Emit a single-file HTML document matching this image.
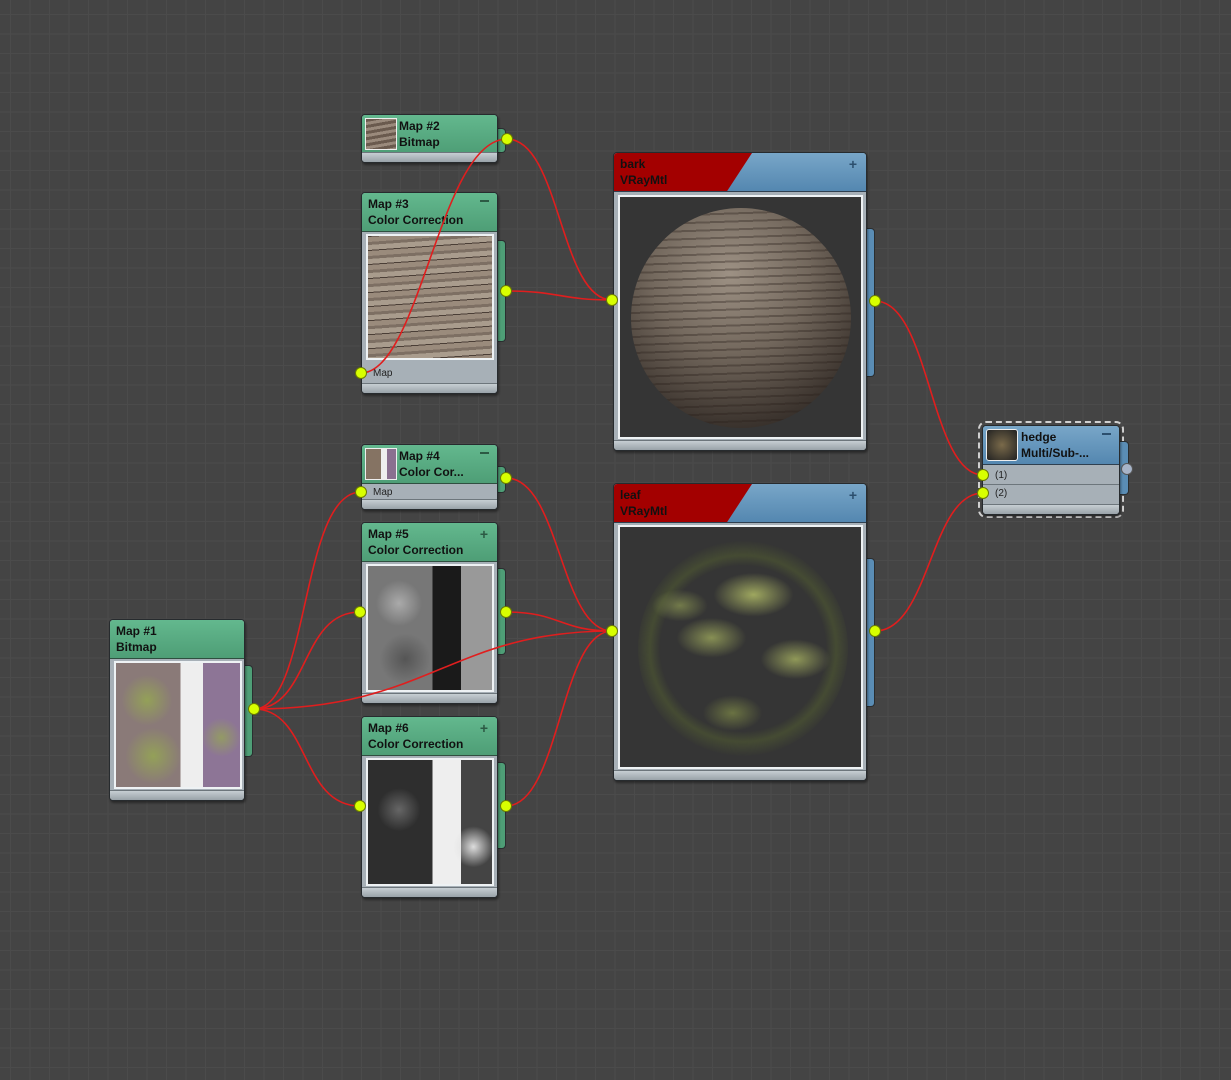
<!DOCTYPE html>
<html><head><meta charset="utf-8"><style>
body{margin:0;width:1231px;height:1080px;overflow:hidden;background-color:#444;
background-image:linear-gradient(#4b4b4b 1px,transparent 1px),linear-gradient(90deg,#4b4b4b 1px,transparent 1px);
background-size:19.5px 19.5px;background-position:10px 14px;font-family:"Liberation Sans",sans-serif;position:relative}
.n{position:absolute;background:#a7b0b7;border:1px solid #272b2e;border-radius:4px;box-sizing:border-box;box-shadow:1px 2px 2px rgba(0,0,0,.4)}
.h{position:absolute;left:0;right:0;top:0;height:38px;border-radius:3px 3px 0 0;background:linear-gradient(#63b88e,#4e9e76);border-bottom:1px solid #2f4f40}
.hb{background:linear-gradient(#78a6c8,#5487b0);border-bottom:1px solid #2f4050}
.t{position:absolute;font-size:12px;font-weight:bold;color:#111;line-height:16px}
.ft{position:absolute;left:0;right:0;bottom:0;height:9px;background:linear-gradient(#c7ced3,#9aa3a9);border-top:1px solid #6d767c;border-radius:0 0 3px 3px}
.tab{position:absolute;width:9px;background:#4e9e76;border:1px solid #2a2e30;border-left:none;border-radius:0 4px 4px 0}
.tabb{background:#5a8db5}
.p{position:absolute;width:12px;height:12px;border-radius:50%;background:#d8ff00;border:1px solid #6a7a00;box-sizing:border-box;margin:-6px 0 0 -6px;z-index:5}
.img{position:absolute;border:2px solid #eef2f4;box-sizing:border-box}
.row{position:absolute;font-size:10px;color:#222}
.min{position:absolute;right:8px;top:7px;width:9px;height:2px;background:#2c5a44}
.pl{position:absolute;right:9px;top:3px;font-size:14px;font-weight:bold;color:#2c5a44}
svg{position:absolute;left:0;top:0;z-index:4}
</style></head><body>

<div class="tab" style="left:496px;top:128px;height:23px"></div>
<div class="n" style="left:361px;top:114px;width:137px;height:49px">
<div class="h"><div style="position:absolute;left:3px;top:3px;width:30px;height:30px;border:1px solid #eee;background:repeating-linear-gradient(170deg,#6a5a4e 0 3px,#9a8a7c 3px 6px)"></div>
<div class="t" style="left:37px;top:3px">Map #2<br>Bitmap</div></div><div class="ft"></div></div>

<div class="tab" style="left:496px;top:240px;height:100px"></div>
<div class="n" style="left:361px;top:192px;width:137px;height:202px">
<div class="h"><div class="t" style="left:6px;top:3px">Map #3<br>Color Correction</div><div class="min"></div></div>
<div class="img" style="left:4px;top:41px;width:128px;height:126px;background:repeating-linear-gradient(176deg,#4a3e36 0 1px,#9a8b7c 1px 6px,#7d6f63 6px 9px,#a99c8d 9px 14px)"></div>
<div class="row" style="left:11px;top:175px">Map</div><div class="ft"></div></div>

<div class="tab tabb" style="left:865px;top:228px;height:147px"></div>
<div class="n" style="left:613px;top:152px;width:254px;height:299px">
<div class="h hb" style="overflow:hidden"><div style="position:absolute;left:0;top:0;width:138px;height:38px;background:#a30000;clip-path:polygon(0 0,100% 0,82% 100%,0 100%)"></div>
<div class="t" style="left:6px;top:3px">bark<br>VRayMtl</div><div class="pl" style="color:#2c4f6e">+</div></div>
<div class="img" style="left:4px;top:42px;width:245px;height:244px;background:#353535">
<div style="position:absolute;left:11px;top:11px;width:220px;height:220px;border-radius:50%;background:repeating-linear-gradient(178deg,rgba(40,30,25,.35) 0 2px,transparent 2px 8px),radial-gradient(circle at 45% 30%,#9d9184 0,#73685d 40%,#3e3630 75%,#1f1b18 100%)"></div></div>
<div class="ft"></div></div>

<div class="tab" style="left:496px;top:466px;height:25px"></div>
<div class="n" style="left:361px;top:444px;width:137px;height:66px">
<div class="h"><div style="position:absolute;left:3px;top:3px;width:30px;height:30px;border:1px solid #eee;background:linear-gradient(90deg,#857363 0 50%,#eee 50% 70%,#8a7090 70%)"></div>
<div class="t" style="left:37px;top:3px">Map #4<br>Color Cor...</div><div class="min"></div></div>
<div class="row" style="left:11px;top:42px">Map</div><div class="ft"></div></div>

<div class="tab" style="left:496px;top:568px;height:85px"></div>
<div class="n" style="left:361px;top:522px;width:137px;height:182px">
<div class="h"><div class="t" style="left:6px;top:3px">Map #5<br>Color Correction</div><div class="pl">+</div></div>
<div class="img" style="left:4px;top:41px;width:128px;height:128px;background:radial-gradient(circle at 25% 30%,#aaa 0,transparent 18%),radial-gradient(circle at 30% 75%,#555 0,transparent 20%),linear-gradient(90deg,#777 0 52%,#1a1a1a 52% 75%,#999 75%)"></div>
<div class="ft"></div></div>

<div class="tab" style="left:496px;top:762px;height:85px"></div>
<div class="n" style="left:361px;top:716px;width:137px;height:182px">
<div class="h"><div class="t" style="left:6px;top:3px">Map #6<br>Color Correction</div><div class="pl">+</div></div>
<div class="img" style="left:4px;top:41px;width:128px;height:128px;background:radial-gradient(circle at 25% 40%,#666 0,transparent 18%),radial-gradient(circle at 85% 70%,#ddd 0,transparent 15%),linear-gradient(90deg,#2e2e2e 0 52%,#eee 52% 75%,#444 75%)"></div>
<div class="ft"></div></div>

<div class="tab tabb" style="left:865px;top:558px;height:147px"></div>
<div class="n" style="left:613px;top:483px;width:254px;height:298px">
<div class="h hb" style="overflow:hidden"><div style="position:absolute;left:0;top:0;width:138px;height:38px;background:#a30000;clip-path:polygon(0 0,100% 0,82% 100%,0 100%)"></div>
<div class="t" style="left:6px;top:3px">leaf<br>VRayMtl</div><div class="pl" style="color:#2c4f6e">+</div></div>
<div class="img" style="left:4px;top:41px;width:245px;height:244px;background:#353535">
<div style="position:absolute;left:18px;top:14px;width:210px;height:215px;border-radius:50%;background:radial-gradient(ellipse 40px 22px at 55% 25%,rgba(170,180,100,.9) 0,transparent 100%),radial-gradient(ellipse 35px 20px at 35% 45%,rgba(150,160,90,.85) 0,transparent 100%),radial-gradient(ellipse 35px 20px at 75% 55%,rgba(160,170,95,.85) 0,transparent 100%),radial-gradient(ellipse 30px 18px at 45% 80%,rgba(120,130,70,.8) 0,transparent 100%),radial-gradient(ellipse 28px 16px at 20% 30%,rgba(130,140,80,.8) 0,transparent 100%),radial-gradient(circle,transparent 55%,rgba(80,90,50,.6) 62%,transparent 72%)"></div></div>
<div class="ft"></div></div>

<div class="tab" style="left:243px;top:665px;height:90px"></div>
<div class="n" style="left:109px;top:619px;width:136px;height:182px">
<div class="h"><div class="t" style="left:6px;top:3px">Map #1<br>Bitmap</div></div>
<div class="img" style="left:4px;top:41px;width:128px;height:128px;background:linear-gradient(90deg,#8a7a78 0 52%,#eee 52% 70%,#8d7596 70%)">
<div style="position:absolute;inset:0;background:radial-gradient(circle at 25% 30%,rgba(150,170,80,.8) 0,transparent 20%),radial-gradient(circle at 30% 75%,rgba(150,170,80,.8) 0,transparent 22%),radial-gradient(circle at 85% 60%,rgba(150,170,80,.7) 0,transparent 15%)"></div></div>
<div class="ft"></div></div>

<div style="position:absolute;left:978px;top:421px;width:146px;height:97px;border:2px dashed #d0d0d0;border-radius:8px;box-sizing:border-box"></div>
<div class="tab tabb" style="left:1119px;top:441px;height:52px"></div>
<div class="n" style="left:982px;top:425px;width:138px;height:90px">
<div class="h hb"><div style="position:absolute;left:3px;top:3px;width:30px;height:30px;border:1px solid #eee;border-radius:3px;background:radial-gradient(circle,#7a6a4a,#222)"></div>
<div class="t" style="left:38px;top:3px">hedge<br>Multi/Sub-...</div><div class="min" style="background:#2c4f6e"></div></div>
<div class="row" style="left:12px;top:44px">(1)</div>
<div style="position:absolute;left:0;right:0;top:58px;border-top:1px solid #6d767c"></div>
<div class="row" style="left:12px;top:62px">(2)</div>
<div class="ft"></div></div>
<div style="position:absolute;left:1121px;top:463px;width:12px;height:12px;border-radius:50%;background:#a7b4c8;border:1px solid #555;box-sizing:border-box;z-index:5"></div>

<svg width="1231" height="1080">
<g fill="none" stroke="#e01e1e" stroke-width="1.6">
<path d="M507,139 C560,139 560,300 612,300"/>
<path d="M507,139 C440,139 420,373 361,373"/>
<path d="M506,291 C560,291 560,300 612,300"/>
<path d="M875,301 C930,301 930,475 983,475"/>
<path d="M875,631 C930,631 930,493 983,493"/>
<path d="M254,709 C310,709 300,492 361,492"/>
<path d="M254,709 C310,709 300,612 360,612"/>
<path d="M254,709 C430,709 450,631 612,631"/>
<path d="M254,709 C310,709 300,806 360,806"/>
<path d="M506,478 C560,478 560,631 612,631"/>
<path d="M506,612 C560,612 560,631 612,631"/>
<path d="M506,806 C560,806 560,631 612,631"/>
</g></svg>
<div class="p" style="left:507px;top:139px"></div>
<div class="p" style="left:506px;top:291px"></div>
<div class="p" style="left:361px;top:373px"></div>
<div class="p" style="left:612px;top:300px"></div>
<div class="p" style="left:875px;top:301px"></div>
<div class="p" style="left:506px;top:478px"></div>
<div class="p" style="left:361px;top:492px"></div>
<div class="p" style="left:506px;top:612px"></div>
<div class="p" style="left:360px;top:612px"></div>
<div class="p" style="left:506px;top:806px"></div>
<div class="p" style="left:360px;top:806px"></div>
<div class="p" style="left:612px;top:631px"></div>
<div class="p" style="left:875px;top:631px"></div>
<div class="p" style="left:254px;top:709px"></div>
<div class="p" style="left:983px;top:475px"></div>
<div class="p" style="left:983px;top:493px"></div>
</body></html>
